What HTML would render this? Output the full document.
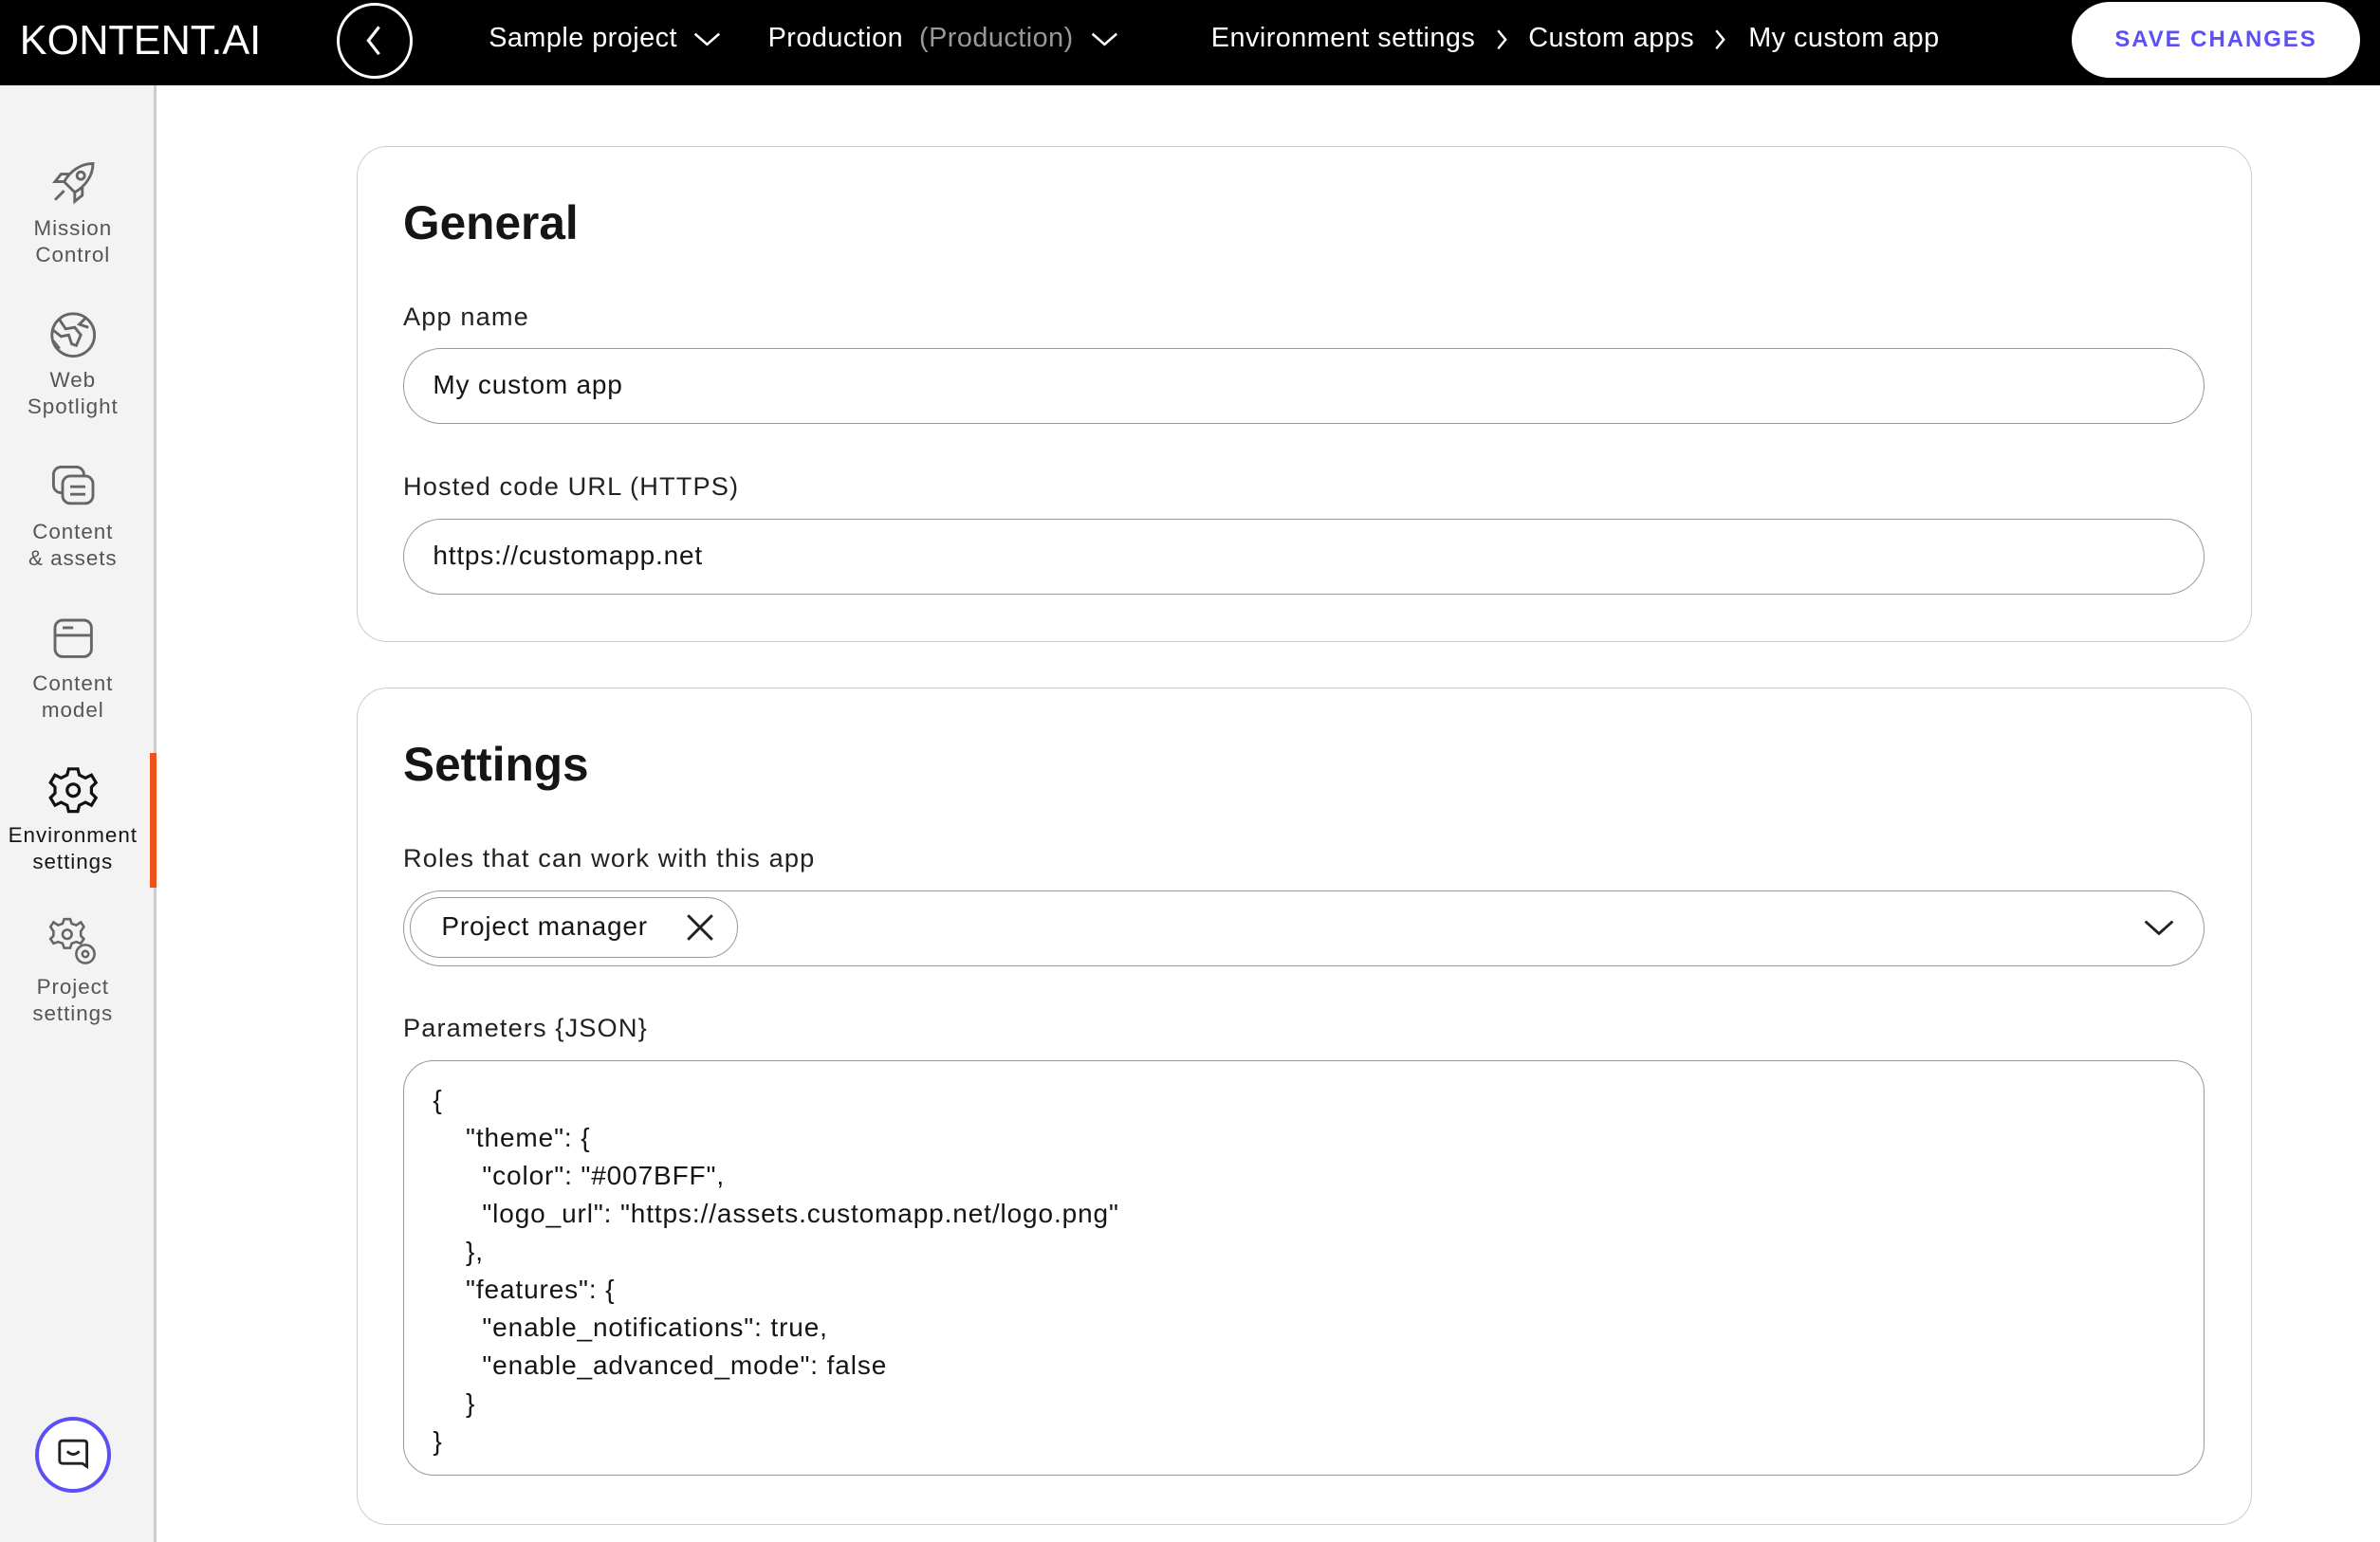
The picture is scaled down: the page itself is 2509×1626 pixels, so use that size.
<!DOCTYPE html>
<html><head><meta charset="utf-8">
<style>
html{zoom:1.6}
*{box-sizing:border-box;margin:0;padding:0}
body{width:1568px;height:1016px;overflow:hidden;font-family:"Liberation Sans",sans-serif;background:#fff;color:#151515;position:relative}
.top{position:absolute;left:0;top:0;width:1568px;height:56px;background:#000;color:#fff}
.top .t{position:absolute;top:15px;font-size:18px;white-space:nowrap;letter-spacing:.3px}
.logo{position:absolute;left:13px;top:12px;font-size:27px;letter-spacing:0px;font-weight:400}
.back{position:absolute;left:222px;top:2px;width:50px;height:50px;border:2px solid #fff;border-radius:50%}
.save{position:absolute;left:1365px;top:1px;width:190px;height:50px;background:#fff;border-radius:25px;color:#5b4ff5;font-weight:bold;font-size:15px;letter-spacing:1.2px;text-align:center;line-height:50px}
.side{position:absolute;left:0;top:56px;width:103px;height:960px;background:#f3f3f3;border-right:2px solid #ccc}
.item{position:absolute;left:0;width:96px;text-align:center;font-size:14px;line-height:17.5px;color:#555;letter-spacing:.6px}
.item svg{display:block;margin:0 auto 4px}
.card{position:absolute;left:235px;width:1249px;border:1px solid #ccc;border-radius:20px;background:#fff}
h2{position:absolute;left:30px;font-size:31px;font-weight:bold}
.lbl{position:absolute;left:30px;font-size:17px;color:#222;letter-spacing:.7px}
.inp{position:absolute;left:30px;width:1187px;height:50px;border:1px solid #999;border-radius:25px;font-size:17.5px;padding:0 19px;line-height:48px;letter-spacing:.5px}
pre{font-family:"Liberation Sans",sans-serif;font-size:17.5px;line-height:25px;letter-spacing:.55px}
</style></head><body>
<div class="top">
<div class="logo">KONTENT.AI</div>
<div class="back"><svg width="46" height="46" viewBox="0 0 46 46"><path d="M26 14 L19 23 L26 32" stroke="#fff" stroke-width="2" fill="none"/></svg></div>
<div class="t" style="left:322px">Sample project</div>
<svg style="position:absolute;left:457px;top:21px" width="18" height="10"><path d="M1 1 L9 8 L17 1" stroke="#fff" stroke-width="1.6" fill="none"/></svg>
<div class="t" style="left:506px">Production <span style="color:#999">&nbsp;(Production)</span></div>
<svg style="position:absolute;left:719px;top:21px" width="18" height="10"><path d="M1 1 L9 8 L17 1" stroke="#fff" stroke-width="1.6" fill="none"/></svg>
<div class="t" style="left:798px">Environment settings</div>
<svg style="position:absolute;left:985px;top:18px" width="10" height="16"><path d="M2 2 L7 8 L2 14" stroke="#fff" stroke-width="1.5" fill="none"/></svg>
<div class="t" style="left:1007px">Custom apps</div>
<svg style="position:absolute;left:1129px;top:18px" width="10" height="16"><path d="M2 2 L7 8 L2 14" stroke="#fff" stroke-width="1.5" fill="none"/></svg>
<div class="t" style="left:1152px">My custom app</div>
<div class="save">SAVE CHANGES</div>
</div>
<div class="side">
<div class="item" style="top:48px"><svg width="34" height="34" viewBox="0 0 34 34" fill="none" stroke="#666" stroke-width="1.8"><path d="M30 4 C22 4 15 9 11 16 L18 23 C25 19 30 12 30 4Z M11 16 L5 16 L9 11 L15 11 M18 23 L18 29 L23 25 L23 19 M11 22 L5 28"/><circle cx="22" cy="12" r="2.5"/></svg>Mission<br>Control</div>
<div class="item" style="top:148px"><svg width="34" height="34" viewBox="0 0 34 34" fill="none" stroke="#666" stroke-width="1.8"><circle cx="17" cy="17" r="14"/><path d="M8 7 L12 13 L18 12 L22 17 L19 24 L16 23 L14 17 L9 18 L4 14 M25 6 L21 10 L27 12 M4 21 L8 26"/></svg>Web<br>Spotlight</div>
<div class="item" style="top:248px"><svg width="34" height="34" viewBox="0 0 34 34" fill="none" stroke="#666" stroke-width="1.8"><rect x="4" y="4" width="20" height="17" rx="5"/><rect x="10" y="10" width="20" height="18" rx="5" fill="#f3f3f3"/><path d="M15 17 H25 M15 22 H25"/></svg>Content<br>&amp; assets</div>
<div class="item" style="top:348px"><svg width="34" height="34" viewBox="0 0 34 34" fill="none" stroke="#666" stroke-width="1.8"><rect x="5" y="5" width="24" height="24" rx="5"/><path d="M5 15 H29 M10 10 H17"/></svg>Content<br>model</div>
<div class="item" style="top:448px;color:#151515"><svg width="34" height="34" viewBox="0 0 34 34" fill="none" stroke="#111" stroke-width="2"><path d="M14 3 H20 L21 7 L25 9 L29 7 L32 12 L29 15 V19 L32 22 L29 27 L25 25 L21 27 L20 31 H14 L13 27 L9 25 L5 27 L2 22 L5 19 V15 L2 12 L5 7 L9 9 L13 7Z"/><circle cx="17" cy="17" r="4"/></svg>Environment<br>settings</div>
<div style="position:absolute;left:99px;top:440px;width:4px;height:89px;background:#f0521c"></div>
<div class="item" style="top:548px"><svg width="34" height="34" viewBox="0 0 34 34" fill="none" stroke="#666" stroke-width="1.6"><path d="M11 2 H15 L16 5 L19 6 L22 4 L24 7 L22 10 V13 L24 15 L22 18 L19 17 L16 18 L15 21 H11 L10 18 L7 17 L4 18 L2 15 L4 13 V10 L2 7 L4 4 L7 6 L10 5Z"/><circle cx="13" cy="12" r="3"/><circle cx="25" cy="25" r="6"/><circle cx="25" cy="25" r="2"/></svg>Project<br>settings</div>
<div style="position:absolute;left:23px;top:878px;width:50px;height:50px;border:3px solid #5b4ff5;border-radius:50%;background:#fff"><svg style="position:absolute;left:11px;top:11px" width="24" height="24" viewBox="0 0 24 24" fill="none" stroke="#222" stroke-width="1.8"><path d="M5 2 H19 Q21 2 21 4 V19 L18 17 H5 Q3 17 3 15 V4 Q3 2 5 2Z M8 9 Q12 13 16 9"/></svg></div>
</div>
<div class="card" style="top:96px;height:327px">
<h2 style="top:32px">General</h2>
<div class="lbl" style="top:102px">App name</div>
<div class="inp" style="top:133px">My custom app</div>
<div class="lbl" style="top:214px">Hosted code URL (HTTPS)</div>
<div class="inp" style="top:245px">https://customapp.net</div>
</div>
<div class="card" style="top:453px;height:552px">
<h2 style="top:32px">Settings</h2>
<div class="lbl" style="top:102px">Roles that can work with this app</div>
<div class="inp" style="top:133px;padding:0">
<div style="position:absolute;left:4px;top:4px;width:216px;height:40px;border:1px solid #999;border-radius:20px;padding-left:20px;line-height:38px">Project manager</div>
<svg style="position:absolute;left:185px;top:14px" width="20" height="20"><path d="M2 2 L18 18 M18 2 L2 18" stroke="#222" stroke-width="1.8"/></svg>
<svg style="position:absolute;left:1146px;top:19px" width="20" height="12"><path d="M1 1 L10 9 L19 1" stroke="#222" stroke-width="1.8" fill="none"/></svg>
</div>
<div class="lbl" style="top:214px">Parameters {JSON}</div>
<div class="inp" style="top:245px;height:274px;border-radius:20px;padding:13px 19px;line-height:25px"><pre>{
    "theme": {
      "color": "#007BFF",
      "logo_url": "https://assets.customapp.net/logo.png"
    },
    "features": {
      "enable_notifications": true,
      "enable_advanced_mode": false
    }
}</pre></div>
</div>
</body></html>
